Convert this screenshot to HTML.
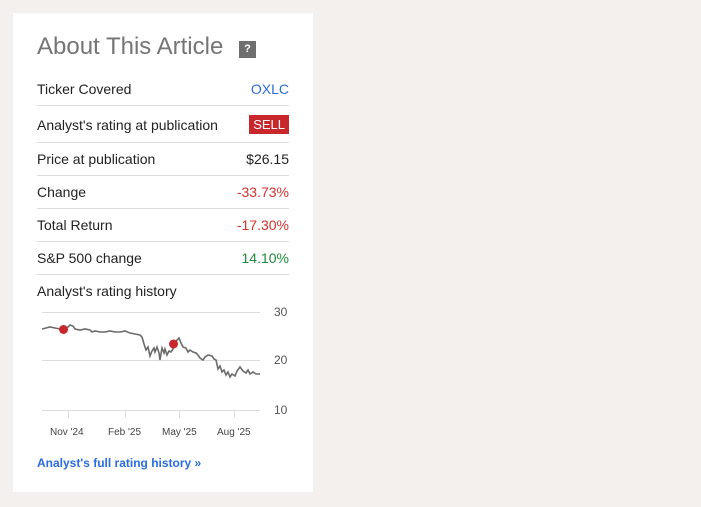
<!DOCTYPE html>
<html><head><style>
body{margin:0;width:701px;height:507px;background:#f3f0ee;font-family:"Liberation Sans",Arial,sans-serif;position:relative;overflow:hidden}
.card{position:absolute;left:13px;top:13px;width:300px;height:479px;background:#fff}
.t{position:absolute;left:37px;top:33px;font-size:24px;color:#757575}
.q{position:absolute;left:239px;top:41px;width:17px;height:17px;background:#6f6f6f;color:#fff;font-size:11px;font-weight:bold;text-align:center;line-height:17px}
.r{position:absolute;left:37px;width:252px;font-size:14px;color:#222;display:flex;justify-content:space-between;align-items:center}
.ln{position:absolute;left:37px;width:252px;height:1px;background:#dcdcdc}
.sell{background:#c8272c;color:#fff;padding:2px 4px;font-size:13px}
.ax{position:absolute;font-size:12px;color:#555}
.m{position:absolute;font-size:10px;color:#444;top:427px}
</style></head><body>
<div class="card"></div>
<div class="t">About This Article</div>
<div class="q">?</div>
<div class="r" style="top:81px">Ticker Covered<span style="color:#2b6de0">OXLC</span></div>
<div class="ln" style="top:105px"></div>
<div class="r" style="top:115px">Analyst's rating at publication<span class="sell">SELL</span></div>
<div class="ln" style="top:142px"></div>
<div class="r" style="top:151px">Price at publication<span>$26.15</span></div>
<div class="ln" style="top:175px"></div>
<div class="r" style="top:184px">Change<span style="color:#d0342c">-33.73%</span></div>
<div class="ln" style="top:208px"></div>
<div class="r" style="top:217px">Total Return<span style="color:#d0342c">-17.30%</span></div>
<div class="ln" style="top:241px"></div>
<div class="r" style="top:250px">S&amp;P 500 change<span style="color:#1f8a3a">14.10%</span></div>
<div class="ln" style="top:274px"></div>
<div class="r" style="top:283px">Analyst's rating history</div>
<svg style="position:absolute;left:0;top:0" width="701" height="507">
<g stroke="#dcdcdc" stroke-width="1"><line x1="42" y1="312.5" x2="260" y2="312.5"/><line x1="42" y1="360.5" x2="260" y2="360.5"/><line x1="42" y1="410.5" x2="260" y2="410.5"/>
<line x1="68.5" y1="410" x2="68.5" y2="418"/><line x1="125.5" y1="410" x2="125.5" y2="418"/><line x1="179.5" y1="410" x2="179.5" y2="418"/><line x1="234.5" y1="410" x2="234.5" y2="418"/></g>
<polyline fill="none" stroke="#6b6b6b" stroke-width="1.6" points="42,329 46,328 50,327 55,328 60,329 64,329 68,327 70,325 73,326 75,329 80,330 85,329 90,330 92,332 95,331 100,332 105,332 110,331 115,332 120,332 125,331 130,333 135,334 140,335 142,337 144,344 146,350 148,347 150,356 152,351 154,348 155,352 157,347 159,353 160,360 162,348 164,353 165,349 167,355 169,351 171,352 173,349 175,344 177,340 179,338 181,343 183,347 186,348 188,352 190,350 193,352 196,353 198,355 200,358 203,360 205,357 208,355 212,356 214,359 216,360 218,369 220,366 222,372 224,370 226,375 228,372 230,377 232,374 235,376 237,371 240,367 243,371 246,373 248,370 250,374 253,372 256,374 260,374"/>
<circle cx="63.5" cy="329.5" r="4.5" fill="#c8272c"/><circle cx="173.5" cy="344" r="4.5" fill="#c8272c"/>
</svg>
<div class="ax" style="left:274px;top:305px">30</div>
<div class="ax" style="left:274px;top:353px">20</div>
<div class="ax" style="left:274px;top:403px">10</div>
<div class="m" style="left:50px">Nov '24</div>
<div class="m" style="left:108px">Feb '25</div>
<div class="m" style="left:162px">May '25</div>
<div class="m" style="left:217px">Aug '25</div>
<div style="position:absolute;left:37px;top:456px;font-size:12px;font-weight:bold;color:#2b6de0">Analyst's full rating history »</div>
</body></html>
